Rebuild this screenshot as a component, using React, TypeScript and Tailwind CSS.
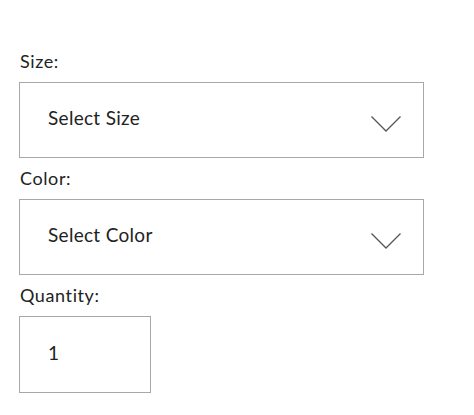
const FONT = { fontFamily: 'Lato, "Open Sans", sans-serif' }

function Chevron() {
  return (
    <svg width="30" height="16" viewBox="0 0 30 16" fill="none" aria-hidden="true" className="mt-[7px]">
      <path d="M0.5 0.5 L15 15 L29.5 0.5" stroke="#555" strokeWidth="1.3" />
    </svg>
  )
}

function SelectBox({ label, placeholder }: { label: string; placeholder: string }) {
  return (
    <div>
      <div className="flex h-[41px] items-center pl-px text-[18px] tracking-[0.6px] text-[#222]">{label}</div>
      <div className="flex h-[76px] w-[405px] items-center justify-between border border-[#a8a8a8] pl-[28px] pr-[22px]">
        <span className="-mt-[3px] text-[19px] tracking-[0.3px] text-[#222]">{placeholder}</span>
        <Chevron />
      </div>
    </div>
  )
}

export default function App() {
  return (
    <div className="min-h-[415px] w-[474px] bg-white pl-[19px] pt-[41px]" style={FONT}>
      <SelectBox label="Size:" placeholder="Select Size" />
      <SelectBox label="Color:" placeholder="Select Color" />
      <div>
        <div className="flex h-[41px] items-center pl-px text-[18px] tracking-[0.6px] text-[#222]">Quantity:</div>
        <div className="flex h-[77px] w-[132px] items-center border border-[#a8a8a8] pl-[28px] text-[19px] text-[#222]">
          <span className="-mt-[3px]">1</span>
        </div>
      </div>
    </div>
  )
}
